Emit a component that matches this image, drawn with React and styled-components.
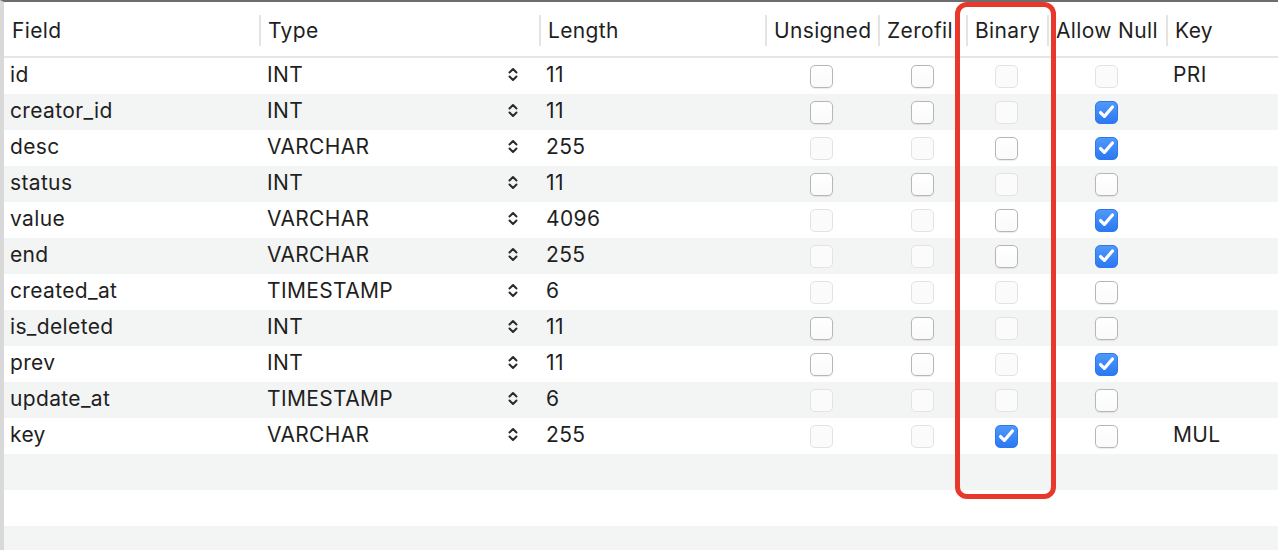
import React from "react";
import styled, { createGlobalStyle, css } from "styled-components";

const GlobalStyle = createGlobalStyle`
  html, body {
    margin: 0;
    padding: 0;
    background: #ffffff;
  }
  body {
    font-family: Inter, "Liberation Sans", Arial, sans-serif;
    -webkit-font-smoothing: antialiased;
  }
`;

const COLS = "255px 280px 226px 113px 88px 81px 119px 1fr";

const Window = styled.div`
  position: relative;
  width: 1278px;
  height: 550px;
  box-sizing: border-box;
  overflow: hidden;
  background: #ffffff;
  border-top: 2px solid #6d6d6d;
  border-left: 4px solid #d9d9d9;
  color: #1f1f1f;
  font-size: 21px;
  letter-spacing: 0.35px;
`;

const HeaderRow = styled.div`
  display: grid;
  grid-template-columns: ${COLS};
  height: 54px;
  border-bottom: 2px solid #e6e6e6;
`;

const HeaderCell = styled.div`
  display: flex;
  align-items: center;
  white-space: nowrap;
  overflow: hidden;
  padding-top: 3px;
  padding-left: ${(p) => (p.first ? "8px" : "0")};
`;

const HeaderLabel = styled.span`
  display: flex;
  align-items: center;
  height: 31px;
  padding-left: 7px;
  border-left: 2px solid #e4e4e4;
  ${(p) =>
    p.first &&
    css`
      padding-left: 0;
      border-left: none;
    `}
`;

const Row = styled.div`
  display: grid;
  grid-template-columns: ${COLS};
  height: 36px;
  background: ${(p) => (p.striped ? "#f3f4f4" : "#ffffff")};
`;

const Cell = styled.div`
  display: flex;
  align-items: center;
  justify-content: ${(p) => (p.center ? "center" : "flex-start")};
  padding-left: ${(p) => (p.center ? "0" : p.pad || "7px")};
  padding-bottom: ${(p) => (p.center ? "0" : "3px")};
  white-space: nowrap;
  overflow: hidden;
`;

const TypeCell = styled(Cell)`
  justify-content: space-between;
  padding-left: 8px;
  padding-right: 21px;
`;

const Box = styled.span`
  box-sizing: border-box;
  width: 23px;
  height: 23px;
  border-radius: 5px;
  display: flex;
  align-items: center;
  justify-content: center;
  ${(p) =>
    p.state === "on" &&
    css`
      background: linear-gradient(#ffffff, #fafafa);
      border: 1px solid #b6b6b6;
      box-shadow: 0 0.5px 1px rgba(0, 0, 0, 0.08);
    `}
  ${(p) =>
    p.state === "off" &&
    css`
      background: #fbfbfb;
      border: 1px solid #e3e3e3;
    `}
  ${(p) =>
    p.state === "chk" &&
    css`
      background: linear-gradient(#4f98fa, #2b79f3);
      border: 1px solid #2f78ec;
    `}
`;

const Outline = styled.div`
  position: absolute;
  left: 951px;
  top: 0;
  width: 101px;
  height: 497px;
  box-sizing: border-box;
  border: 5px solid #e8372b;
  border-radius: 12px;
  pointer-events: none;
`;

const Updown = () => (
  <svg width="10" height="15" viewBox="0 0 10 15" fill="none">
    <path d="M1.5 5.5 L5 2 L8.5 5.5" stroke="#2a2a2a" strokeWidth="2" strokeLinecap="round" strokeLinejoin="round" />
    <path d="M1.5 9.5 L5 13 L8.5 9.5" stroke="#2a2a2a" strokeWidth="2" strokeLinecap="round" strokeLinejoin="round" />
  </svg>
);

const Check = ({ state }) => (
  <Box state={state}>
    {state === "chk" && (
      <svg width="17" height="16" viewBox="0 0 16 15" fill="none">
        <path d="M2.4 8 L6 11.6 L13.6 2.8" stroke="#ffffff" strokeWidth="3" strokeLinecap="round" strokeLinejoin="round" />
      </svg>
    )}
  </Box>
);

const headers = ["Field", "Type", "Length", "Unsigned", "Zerofil", "Binary", "Allow Null", "Key"];

const fields = [
  { name: "id", type: "INT", len: "11", u: "on", z: "on", b: "off", n: "off", key: "PRI" },
  { name: "creator_id", type: "INT", len: "11", u: "on", z: "on", b: "off", n: "chk" },
  { name: "desc", type: "VARCHAR", len: "255", u: "off", z: "off", b: "on", n: "chk" },
  { name: "status", type: "INT", len: "11", u: "on", z: "on", b: "off", n: "on" },
  { name: "value", type: "VARCHAR", len: "4096", u: "off", z: "off", b: "on", n: "chk" },
  { name: "end", type: "VARCHAR", len: "255", u: "off", z: "off", b: "on", n: "chk" },
  { name: "created_at", type: "TIMESTAMP", len: "6", u: "off", z: "off", b: "off", n: "on" },
  { name: "is_deleted", type: "INT", len: "11", u: "on", z: "on", b: "off", n: "on" },
  { name: "prev", type: "INT", len: "11", u: "on", z: "on", b: "off", n: "chk" },
  { name: "update_at", type: "TIMESTAMP", len: "6", u: "off", z: "off", b: "off", n: "on" },
  { name: "key", type: "VARCHAR", len: "255", u: "off", z: "off", b: "chk", n: "on", key: "MUL" },
];

export default function App() {
  return (
    <>
      <GlobalStyle />
      <Window>
        <HeaderRow>
          {headers.map((h, i) => (
            <HeaderCell key={h} first={i === 0}>
              <HeaderLabel first={i === 0}>{h}</HeaderLabel>
            </HeaderCell>
          ))}
        </HeaderRow>
        {fields.map((f, i) => (
          <Row key={f.name} striped={i % 2 === 1}>
            <Cell pad="6px">{f.name}</Cell>
            <TypeCell>
              <span>{f.type}</span>
              <Updown />
            </TypeCell>
            <Cell>{f.len}</Cell>
            <Cell center>
              <Check state={f.u} />
            </Cell>
            <Cell center>
              <Check state={f.z} />
            </Cell>
            <Cell center>
              <Check state={f.b} />
            </Cell>
            <Cell center>
              <Check state={f.n} />
            </Cell>
            <Cell>{f.key || ""}</Cell>
          </Row>
        ))}
        {[0, 1, 2].map((k) => (
          <Row key={"empty" + k} striped={k % 2 === 0} />
        ))}
        <Outline />
      </Window>
    </>
  );
}
